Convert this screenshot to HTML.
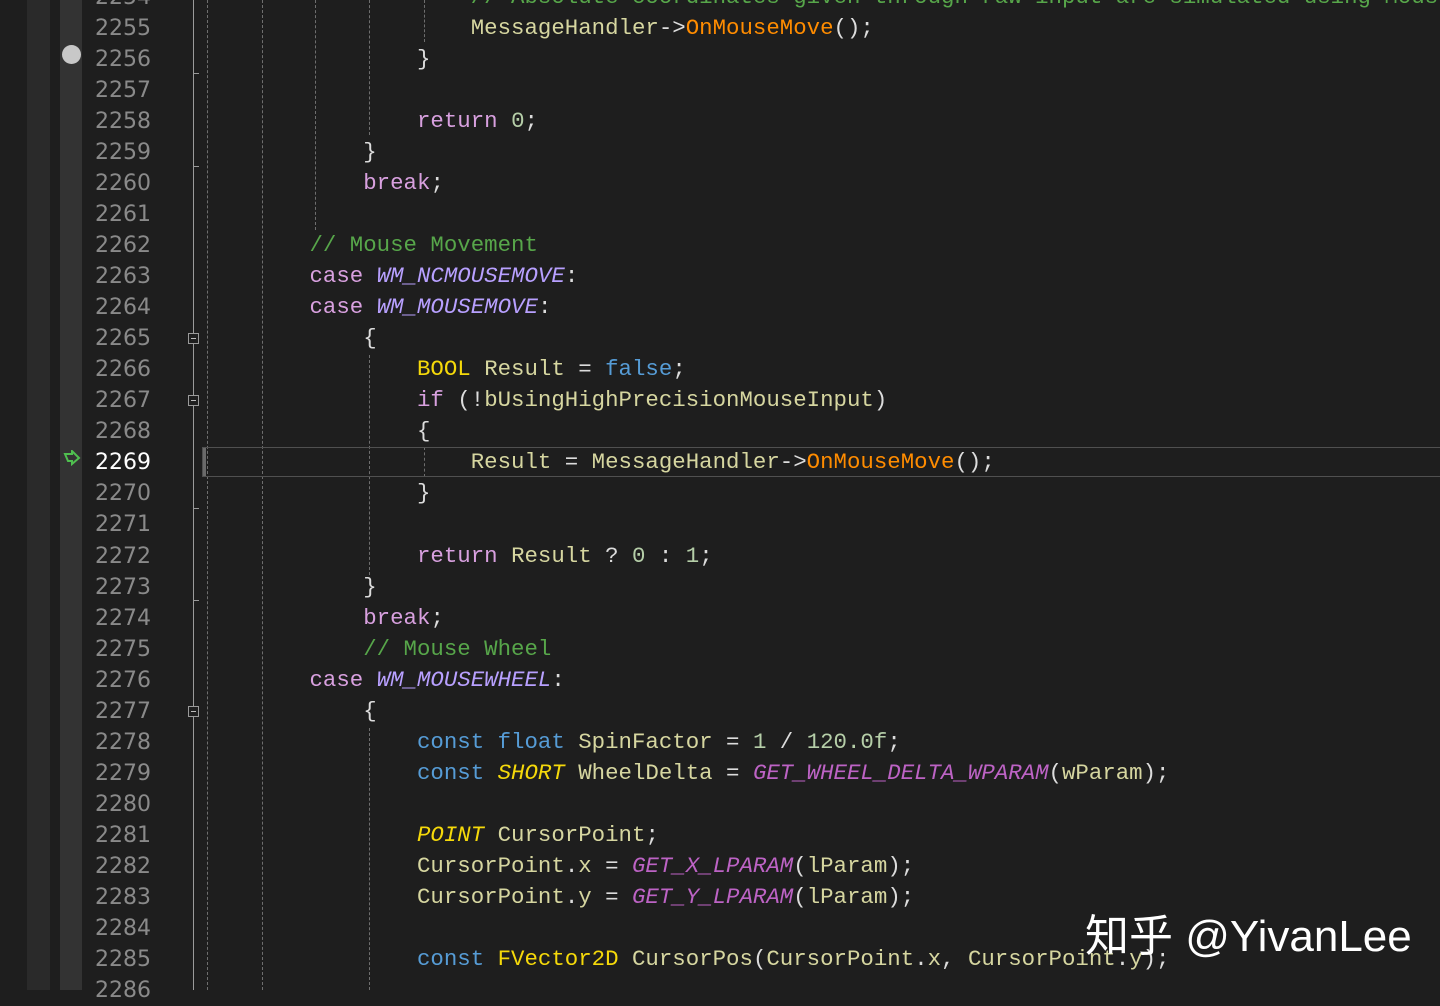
<!DOCTYPE html>
<html><head><meta charset="utf-8"><style>
html,body{margin:0;padding:0;width:1440px;height:990px;overflow:hidden;background:#1e1e1e;}
.g1{position:absolute;left:27px;top:0;width:23px;height:990px;background:#2a2a2a;}
.g2{position:absolute;left:60px;top:0;width:22px;height:990px;background:#333333;}
.fold{position:absolute;left:193px;top:0;width:1px;height:990px;background:#9a9a9a;}
.guide{position:absolute;top:0;height:990px;width:0;border-left:1px dashed #6e6e6e;}
.ln{position:absolute;left:80px;width:71px;text-align:right;font:22px "DejaVu Sans","Liberation Sans",sans-serif;color:#8a8a8a;height:31px;line-height:31px;}
.code{position:absolute;left:202px;white-space:pre;font:22.4px "Liberation Mono",monospace;color:#dcdcdc;height:31px;line-height:31px;}
.k{color:#569cd6}.c{color:#d8a0df}.cm{color:#57a64a}.m{color:#bd63c5;font-style:italic}.t{color:#f5d90a}.ti{color:#f5d90a;font-style:italic}.v{color:#d6d6a0}.n{color:#b5cea8}.f{color:#ff8c00}.mc{color:#b8a0ff;font-style:italic}
.cur{position:absolute;left:202px;top:447px;width:1240px;height:30px;border:1px solid #505050;border-right:none;box-sizing:border-box;}
.cur:before{content:"";position:absolute;left:0;top:0;width:3px;height:28px;background:#6a6a6a;}
.box{position:absolute;left:188px;width:9px;height:9px;border:1px solid #9a9a9a;background:#1e1e1e;}
.box:after{content:"";position:absolute;left:2px;top:4px;width:5px;height:1px;background:#bbb;}
.tick{position:absolute;left:193px;width:6px;height:1px;background:#9a9a9a;}
.wm{position:absolute;left:1085px;top:900px;font:44px "Liberation Sans","Noto Sans CJK SC",sans-serif;color:#fff;}
</style></head><body>
<div class="g1"></div><div class="g2"></div>
<div style="position:absolute;left:62px;top:45px;width:19px;height:19px;border-radius:50%;background:#c8c8c8"></div>
<svg style="position:absolute;left:63px;top:450px" width="18" height="16" viewBox="0 0 18 16"><path d="M2 4 L9 4 L9 1 L16 8 L9 14 L9 11 L5 11 Z" fill="none" stroke="#4fbf4f" stroke-width="2"/></svg>
<div class="fold"></div>
<div class="tick" style="top:73px"></div><div class="tick" style="top:166px"></div><div class="tick" style="top:508px"></div><div class="tick" style="top:600px"></div>
<div class="box" style="top:333px"></div><div class="box" style="top:395px"></div><div class="box" style="top:706px"></div>
<div class="guide" style="left:207px"></div><div class="guide" style="left:262px"></div><div class="guide" style="left:315px;top:0;height:230px"></div><div class="guide" style="left:369px;top:0;height:135px"></div><div class="guide" style="left:424px;top:0;height:42px"></div>
<div class="guide" style="left:369px;top:355px;height:220px"></div><div class="guide" style="left:424px;top:447px;height:30px"></div>
<div class="guide" style="left:369px;top:728px;height:262px"></div>
<div class="cur"></div>
<div id="L"></div>
<script>
var lines=[
[2254,'                    <span class="cm">// Absolute coordinates given through raw input are simulated using MouseMove</span>'],
[2255,'                    <span class="v">MessageHandler</span>-&gt;<span class="f">OnMouseMove</span>();'],
[2256,'                }'],[2257,''],
[2258,'                <span class="c">return</span> <span class="n">0</span>;'],
[2259,'            }'],[2260,'            <span class="c">break</span>;'],[2261,''],
[2262,'        <span class="cm">// Mouse Movement</span>'],
[2263,'        <span class="c">case</span> <span class="mc">WM_NCMOUSEMOVE</span>:'],
[2264,'        <span class="c">case</span> <span class="mc">WM_MOUSEMOVE</span>:'],
[2265,'            {'],
[2266,'                <span class="t">BOOL</span> <span class="v">Result</span> = <span class="k">false</span>;'],
[2267,'                <span class="c">if</span> (!<span class="v">bUsingHighPrecisionMouseInput</span>)'],
[2268,'                {'],
[2269,'                    <span class="v">Result</span> = <span class="v">MessageHandler</span>-&gt;<span class="f">OnMouseMove</span>();'],
[2270,'                }'],[2271,''],
[2272,'                <span class="c">return</span> <span class="v">Result</span> ? <span class="n">0</span> : <span class="n">1</span>;'],
[2273,'            }'],[2274,'            <span class="c">break</span>;'],
[2275,'            <span class="cm">// Mouse Wheel</span>'],
[2276,'        <span class="c">case</span> <span class="mc">WM_MOUSEWHEEL</span>:'],
[2277,'            {'],
[2278,'                <span class="k">const</span> <span class="k">float</span> <span class="v">SpinFactor</span> = <span class="n">1</span> / <span class="n">120.0f</span>;'],
[2279,'                <span class="k">const</span> <span class="ti">SHORT</span> <span class="v">WheelDelta</span> = <span class="m">GET_WHEEL_DELTA_WPARAM</span>(<span class="v">wParam</span>);'],
[2280,''],
[2281,'                <span class="ti">POINT</span> <span class="v">CursorPoint</span>;'],
[2282,'                <span class="v">CursorPoint</span>.<span class="v">x</span> = <span class="m">GET_X_LPARAM</span>(<span class="v">lParam</span>);'],
[2283,'                <span class="v">CursorPoint</span>.<span class="v">y</span> = <span class="m">GET_Y_LPARAM</span>(<span class="v">lParam</span>);'],
[2284,''],
[2285,'                <span class="k">const</span> <span class="t">FVector2D</span> <span class="v">CursorPos</span>(<span class="v">CursorPoint</span>.<span class="v">x</span>, <span class="v">CursorPoint</span>.<span class="v">y</span>);'],
[2286,'']];
var h='';
lines.forEach(function(l){var y=27+(l[0]-2255)*31.03-14;
h+='<div class="ln" style="top:'+y+'px;'+(l[0]==2269?'color:#fff':'')+'">'+l[0]+'</div>';
h+='<div class="code" style="top:'+y+'px">'+l[1]+'</div>';});
document.getElementById('L').innerHTML=h;
</script>
<div class="wm">知乎 @YivanLee</div>
</body></html>
